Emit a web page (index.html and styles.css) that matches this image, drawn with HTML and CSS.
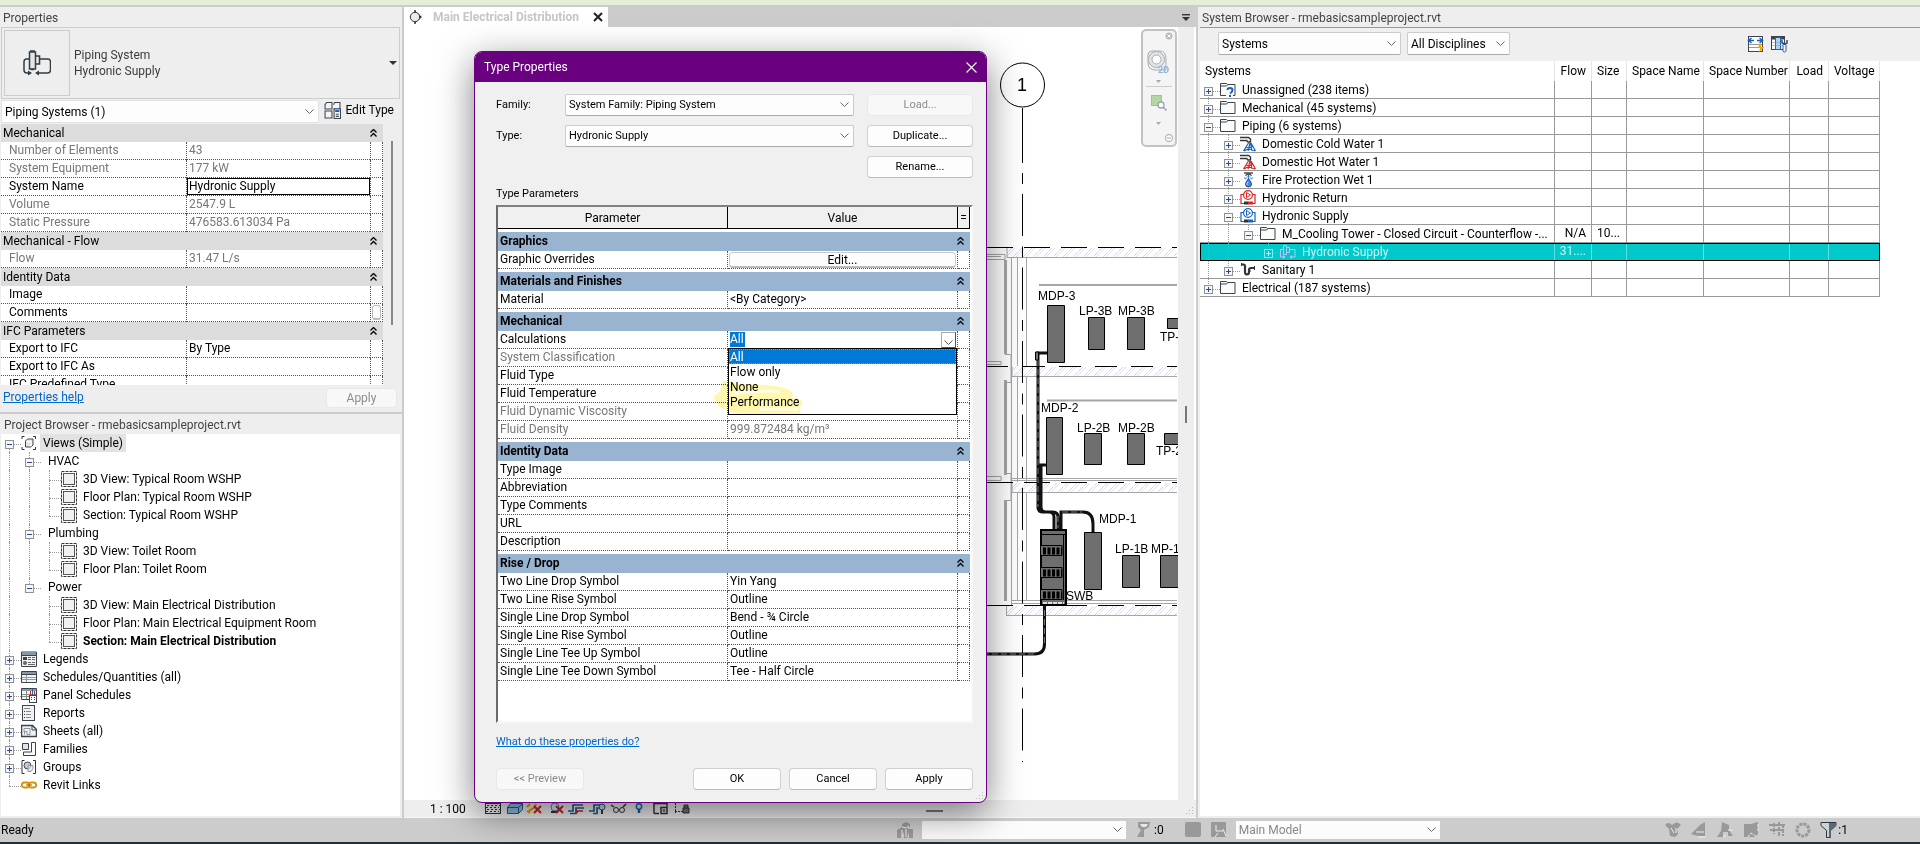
FILE: index.html
```html
<!DOCTYPE html>
<html lang="en">
<head>
    <meta charset="UTF-8">
    <meta name="viewport" content="width=device-width, initial-scale=1.0">
    <title>Main Electrical Distribution</title>
    <link rel="stylesheet" href="styles.css">
</head>
<body>
    <svg class="defs" aria-hidden="true">
        <symbol id="i-sheet" viewBox="0 0 16 16"><rect x="0.5" y="0.5" width="15" height="15" fill="none" stroke="#333" stroke-dasharray="3 1"/><rect x="2.5" y="2.5" width="11" height="11" fill="#f1f1f1" stroke="#555"/></symbol>
        <symbol id="i-views" viewBox="0 0 16 16"><path d="M3.500 1.500h-2.500v2.500M12 1.500h2.500v2.500M3.500 14.500h-2.500v-2.500M12 14.500h2.500v-2.500" fill="none" stroke="#333"/><path d="M4.500 6l2-2h5.500v6l-2 2h-5.500z" fill="#e4e6e8" stroke="#3d434c"/><path d="M5 6.500h5v5" fill="none" stroke="#fff"/></symbol>
        <symbol id="i-legend" viewBox="0 0 16 16"><path d="M0.500 1h15v14.500h-15z" fill="#f0f0f0" stroke="#3d434c"/><path d="M1 1h14v3H1z" fill="#8797a5"/><path d="M0 4.500h16" stroke="#3d434c"/><rect x="2" y="6" width="4" height="3" fill="#3d434c"/><circle cx="4" cy="12" r="2" fill="#666"/><path d="M7 6.500h3M11 6.500h3M7 8.500h3M11 8.500h3M7 11.500h3M11 11.500h3M7 13.500h7" stroke="#666"/></symbol>
        <symbol id="i-schedule" viewBox="0 0 16 16"><path d="M0.500 2.500h15v11h-15z" fill="#f4f4f4" stroke="#3d434c"/><path d="M1 3h14v2H1z" fill="#8797a5"/><path d="M0 5.500h16" stroke="#3d434c"/><path d="M1 8.500h14M1 10.500h14M5.500 6v7" stroke="#999"/></symbol>
        <symbol id="i-panel" viewBox="0 0 16 16"><path d="M0.500 1.500h15v11h-15z" fill="#f4f4f4" stroke="#3d434c"/><path d="M1 2h14v2H1z" fill="#8797a5"/><path d="M1 7.500h14M1 9.500h14M5.500 4v8" stroke="#888"/><path d="M9.500 4v4M13.500 4v4" stroke="#d22"/><path d="M11.500 2v7" stroke="#1565c0"/><rect x="8.500" y="8.500" width="7" height="7" fill="#fff" stroke="#3d434c"/><path d="M10.500 10v4M13.500 10v4" stroke="#3d434c" stroke-dasharray="1 1"/></symbol>
        <symbol id="i-report" viewBox="0 0 16 16"><rect x="1.500" y="0.500" width="12" height="15" fill="#f0f2f3" stroke="#3d434c"/><path d="M3 3.500h6M5 6.500h5M5 9.500h5M5 12.500h5" stroke="#888"/><path d="M3 6.500h1M3 9.500h1M3 12.500h1" stroke="#333"/></symbol>
        <symbol id="i-sheets" viewBox="0 0 16 16"><path d="M0.500 2.500h11l4 4v7h-15z" fill="#f0f2f3" stroke="#3d434c" stroke-width="1.500"/><path d="M11 2v5h5" fill="none" stroke="#3d434c"/><path d="M3 5.500h6v6h-3v-3h-3z M3.500 11.500v-3" fill="none" stroke="#8797a5"/></symbol>
        <symbol id="i-family" viewBox="0 0 16 16"><path d="M1.500 2.500h6v6h-6z" fill="#dfe5ea" stroke="#3d434c"/><path d="M10.500 1.500h4v13h-12v-3.500h8z" fill="#fafafa" stroke="#3d434c"/></symbol>
        <symbol id="i-group" viewBox="0 0 16 16"><path d="M3.500 1.500h-2.500v13h2.500M12 1.500h2.500v13h-2.500" fill="none" stroke="#333"/><circle cx="6.500" cy="6.500" r="3.500" fill="#c4ccd4" stroke="#3d434c"/><path d="M7 6.500h5v3l-2 3H7z" fill="#e4e6e8" fill-opacity=".7" stroke="#8797a5"/></symbol>
        <symbol id="i-link" viewBox="0 0 16 16"><rect x="0.800" y="5.500" width="7.500" height="5" rx="2.500" fill="none" stroke="#d99200" stroke-width="1.800"/><rect x="7.700" y="5.500" width="7.500" height="5" rx="2.500" fill="none" stroke="#d99200" stroke-width="1.800"/><path d="M5 8h6" stroke="#8b5c00"/></symbol>
        <symbol id="i-folder" viewBox="0 0 16 16"><path d="M.5 1.500v12h14.500v-11H7.500l-1-1z" fill="#fafbfb" stroke="#3d434c"/><path d="M.5 4h6l1.500-1.500" fill="none" stroke="#3d434c"/></symbol>
        <symbol id="i-unassigned" viewBox="0 0 16 16"><path d="M6 13.500H.5v-12h6l1 1H15v11h-2" fill="#fafbfb" stroke="#3d434c"/><path d="M.5 4h6l1.500-1.500" fill="none" stroke="#3d434c"/><path d="M7.500 8q0-2 2.500-2t2.500 2-2.500 3.500" fill="none" stroke="#1565c0" stroke-width="2"/><rect x="9" y="13" width="2" height="2" fill="#1565c0"/></symbol>
        <symbol id="i-tap" viewBox="0 0 16 16"><path d="M0 1.500h8.500l2 1.500v3M0 4.500h6.500l1.500 1.500h3" fill="none" stroke="#2f353d" stroke-width="1.400"/><path d="M0 3h8" stroke="#ccd3da" stroke-width="1.500"/><path d="M8.500 7l-5 8M10 7l-2 8M10.500 7l1.500 8M11 7l4.500 8M6 11l9 4M13 10l-9 5" stroke="currentColor" fill="none" stroke-width="1.200"/></symbol>
        <symbol id="i-fire" viewBox="0 0 16 16"><path d="M4 1h9M6 2.500h5" stroke="#555" stroke-width="1.500"/><path d="M5 3l7 4M12 3L5 7M8.500 3v4M4 6h1M12 6h1" stroke="#1a73c8" stroke-dasharray="2 1"/><path d="M8.500 6.500q-3 4-3 5.500a3 3 0 006 0q0-1.500-3-5.500z" fill="#4a86d8" stroke="#1e4f9c"/><path d="M8 10q-1.500 2-1 3" stroke="#c4e0fa" fill="none"/></symbol>
        <symbol id="i-pump" viewBox="0 0 16 16"><path d="M3.500 4.500H1v9h14v-9h-2.500" fill="none" stroke="currentColor" stroke-width="1.200"/><circle cx="8" cy="5" r="4.400" fill="#fff" stroke="currentColor" stroke-width="1.200"/><path d="M6.500 2.500l4 2.500-4 2.500z" fill="#fff" stroke="currentColor"/><path d="M4 13h4" stroke="#333" stroke-width="3"/><path d="M8 13h5" stroke="currentColor" stroke-width="3"/></symbol>
        <symbol id="i-trap" viewBox="0 0 16 16"><path d="M1 2.500h2.500q1.500 0 1.500 2V10q0 2.500 2 2.500t2-2.500V8q0-2 2-2h4" fill="none" stroke="#2f353d" stroke-width="2.200"/><path d="M1.500 1v3M14.500 4v4M8 9h3" stroke="#2f353d"/></symbol>
        <symbol id="i-pipe" viewBox="0 0 28 26"><path d="M6 9H3.500Q1 9 1 12v8q0 3 3 3h3M16 9h9q2.500 0 2.500 3v8q0 3-3 3H15" fill="none" stroke="currentColor" stroke-width="1.500"/><path d="M6.500 2h6v17h-6z" fill="#e3e6e9" stroke="currentColor" stroke-width="1.500"/><path d="M7 1h5M12.500 6h4v8h-4M8 19.500h3" fill="none" stroke="currentColor" stroke-width="1.600"/><path d="M5 20.500l4 2.500-4 2.500zM16 20.500l-4 2.500 4 2.500z" fill="currentColor"/></symbol>
        <symbol id="i-pipe-sm" viewBox="0 0 16 16"><path d="M3.500 5.500h-3v7.500h4M9.500 5.500h5.500v7.500h-4M3.500 1.500h3v9h-3zM6.500 3.500h3v5h-3" fill="none" stroke="currentColor"/><path d="M3 11l2.500 2-2.500 2zM12 11l-2.500 2 2.500 2z" fill="currentColor"/></symbol>
        <symbol id="i-chev" viewBox="0 0 7 8"><path d="M.5 3.500l3-3 3 3M.5 7.500l3-3 3 3" fill="none" stroke="#000" stroke-width="1.300"/></symbol>
    </svg>

    <div class="app">
        <div class="ribbon-edge"></div>

        <div class="workspace">
            <div class="left-dock">
                <section class="properties">
                    <h2 class="dock-title">Properties</h2>
                    <div class="type-selector">
                        <div class="type-thumb"><svg class="pipe-lg"><use href="#i-pipe"/></svg></div>
                        <div class="type-name">Piping System<br>Hydronic Supply</div>
                        <button class="type-arrow" aria-label="Change type"></button>
                    </div>
                    <div class="filter-row">
                        <select class="combo flat" aria-label="Element filter"><option>Piping Systems (1)</option></select>
                        <button class="edit-type"><svg viewBox="0 0 16 16"><path d="M1 2.500l1.500-2h5v6h-6.500zM9 2.500l1-2h5v6H9M1 8.500h6.500v6.500H1z" fill="#f5f5f5" stroke="#3d434c"/><rect x="9.500" y="6.500" width="6" height="9" fill="#fff" stroke="#3d434c"/><path d="M10.500 8.500h4" stroke="#1565c0" stroke-width="2"/><path d="M11 11.500h3M11 13.500h3" stroke="#3d434c"/></svg>Edit Type</button>
                    </div>
                    <div class="prop-scroll">
                        <table class="prop-table">
                            <colgroup><col class="c-prop"><col><col class="c-assoc"></colgroup>
                            <tbody>
                                <tr class="group"><th colspan="3">Mechanical<svg class="chev"><use href="#i-chev"/></svg></th></tr>
                                <tr class="off"><td>Number of Elements</td><td>43</td><td></td></tr>
                                <tr class="off"><td>System Equipment</td><td>177 kW</td><td></td></tr>
                                <tr><td>System Name</td><td class="editing"><input type="text" value="Hydronic Supply" aria-label="System Name"></td><td></td></tr>
                                <tr class="off"><td>Volume</td><td>2547.9 L</td><td></td></tr>
                                <tr class="off"><td>Static Pressure</td><td>476583.613034 Pa</td><td></td></tr>
                                <tr class="group"><th colspan="3">Mechanical - Flow<svg class="chev"><use href="#i-chev"/></svg></th></tr>
                                <tr class="off"><td>Flow</td><td>31.47 L/s</td><td></td></tr>
                                <tr class="group"><th colspan="3">Identity Data<svg class="chev"><use href="#i-chev"/></svg></th></tr>
                                <tr><td>Image</td><td></td><td></td></tr>
                                <tr><td>Comments</td><td></td><td><button class="mini" aria-label="Associate parameter"></button></td></tr>
                                <tr class="group"><th colspan="3">IFC Parameters<svg class="chev"><use href="#i-chev"/></svg></th></tr>
                                <tr><td>Export to IFC</td><td>By Type</td><td></td></tr>
                                <tr><td>Export to IFC As</td><td></td><td></td></tr>
                                <tr><td>IFC Predefined Type</td><td></td><td></td></tr>
                            </tbody>
                        </table>
                        <div class="thumb"></div>
                    </div>
                    <div class="prop-foot">
                        <a href="#">Properties help</a>
                        <button class="btn" disabled>Apply</button>
                    </div>
                </section>

                <section class="project-browser">
                    <h2 class="dock-title">Project Browser - rmebasicsampleproject.rvt</h2>
                    <ul class="tree">
                        <li><span class="g first tee"><button class="exp minus" aria-label="Collapse"></button></span><svg class="ico"><use href="#i-views"/></svg><span class="label picked">Views (Simple)</span></li>
                        <li><span class="g"></span><span class="g tee"><button class="exp minus" aria-label="Collapse"></button></span><span class="label branch">HVAC</span></li>
                        <li><span class="g"></span><span class="g"></span><span class="g tee"></span><svg class="ico"><use href="#i-sheet"/></svg><span class="label">3D View: Typical Room WSHP</span></li>
                        <li><span class="g"></span><span class="g"></span><span class="g tee"></span><svg class="ico"><use href="#i-sheet"/></svg><span class="label">Floor Plan: Typical Room WSHP</span></li>
                        <li><span class="g"></span><span class="g"></span><span class="g tee end"></span><svg class="ico"><use href="#i-sheet"/></svg><span class="label">Section: Typical Room WSHP</span></li>
                        <li><span class="g"></span><span class="g tee"><button class="exp minus" aria-label="Collapse"></button></span><span class="label branch">Plumbing</span></li>
                        <li><span class="g"></span><span class="g"></span><span class="g tee"></span><svg class="ico"><use href="#i-sheet"/></svg><span class="label">3D View: Toilet Room</span></li>
                        <li><span class="g"></span><span class="g"></span><span class="g tee end"></span><svg class="ico"><use href="#i-sheet"/></svg><span class="label">Floor Plan: Toilet Room</span></li>
                        <li><span class="g"></span><span class="g tee end"><button class="exp minus" aria-label="Collapse"></button></span><span class="label branch">Power</span></li>
                        <li><span class="g"></span><span class="g none"></span><span class="g tee"></span><svg class="ico"><use href="#i-sheet"/></svg><span class="label">3D View: Main Electrical Distribution</span></li>
                        <li><span class="g"></span><span class="g none"></span><span class="g tee"></span><svg class="ico"><use href="#i-sheet"/></svg><span class="label">Floor Plan: Main Electrical Equipment Room</span></li>
                        <li><span class="g"></span><span class="g none"></span><span class="g tee end"></span><svg class="ico"><use href="#i-sheet"/></svg><span class="label"><b>Section: Main Electrical Distribution</b></span></li>
                        <li><span class="g tee"><button class="exp" aria-label="Expand"></button></span><svg class="ico"><use href="#i-legend"/></svg><span class="label">Legends</span></li>
                        <li><span class="g tee"><button class="exp" aria-label="Expand"></button></span><svg class="ico"><use href="#i-schedule"/></svg><span class="label">Schedules/Quantities (all)</span></li>
                        <li><span class="g tee"><button class="exp" aria-label="Expand"></button></span><svg class="ico"><use href="#i-panel"/></svg><span class="label">Panel Schedules</span></li>
                        <li><span class="g tee"><button class="exp" aria-label="Expand"></button></span><svg class="ico"><use href="#i-report"/></svg><span class="label">Reports</span></li>
                        <li><span class="g tee"><button class="exp" aria-label="Expand"></button></span><svg class="ico"><use href="#i-sheets"/></svg><span class="label">Sheets (all)</span></li>
                        <li><span class="g tee"><button class="exp" aria-label="Expand"></button></span><svg class="ico"><use href="#i-family"/></svg><span class="label">Families</span></li>
                        <li><span class="g tee"><button class="exp" aria-label="Expand"></button></span><svg class="ico"><use href="#i-group"/></svg><span class="label">Groups</span></li>
                        <li><span class="g tee end"></span><svg class="ico"><use href="#i-link"/></svg><span class="label">Revit Links</span></li>
                    </ul>
                </section>
            </div>

            <main class="view">
                <div class="tabs">
                    <div class="tab">
                        <svg class="tab-ico" viewBox="0 0 14 16"><path d="M6 1v14" stroke="#2f353d" stroke-width="1.500"/><path d="M6 2l7 6-7 6z" fill="#2f353d"/><circle cx="6" cy="8" r="4.700" fill="#e8ecef" stroke="#2f353d"/></svg>
                        <span>Main Electrical Distribution</span>
                        <button class="tab-close" aria-label="Close view"><svg viewBox="0 0 10 10"><path d="M1 1l8 8M9 1l-8 8" stroke="#222" stroke-width="2"/></svg></button>
                    </div>
                    <button class="tab-list" aria-label="List views"><svg viewBox="0 0 8 7"><path d="M0 .7h8" stroke="#333" stroke-width="1.400"/><path d="M0 3h8L4 7z" fill="#333"/></svg></button>
                </div>
                <div class="canvas-row">
                    <div class="canvas">
                        <svg class="drawing" viewBox="404 27 774 773" preserveAspectRatio="xMaxYMin meet">
                            <defs>
                                <pattern id="hatch" width="10" height="10" patternUnits="userSpaceOnUse"><path d="M0 10L10 0" stroke="#cfcff0" stroke-dasharray="5 1"/><path d="M3 10L13 0M-7 10L3 0" stroke="#dedef5"/></pattern>
                            </defs>
                            <g fill="url(#hatch)" stroke="none">
                                <rect x="1007" y="248" width="170" height="9"/>
                                <rect x="1012" y="367" width="165" height="9"/>
                                <rect x="1012" y="483" width="165" height="9"/>
                                <rect x="1006" y="606" width="171" height="9"/>
                            </g>
                            <g stroke="#a6a6a6" fill="none">
                                <path d="M1007 257.500h170M1012 376.500h165M1012 492.500h165M1006 615.500h171M1007 248v10M1012 367v10M1012 483v10M1006.500 606v10"/>
                                <path d="M1011.500 258v347M1017.500 258v108M1017.500 377v105M1017.500 493v107M1026.500 258v108M1026.500 377v105M1026.500 493v107"/>
                                <path d="M1012 478.500h165M1012 480.500h165M1012 600.500h165M1012 603.500h165"/>
                                <path d="M987 254.500h18v5h-18M987 256.500h14M987 361.500h14v3h-14M987 476.500h14v4h-14M1005 354.500h6v28h-6M1005 473.500h6v27h-6"/>
                                <path d="M1005.500 260v94M1005.500 380v95M1005.500 500v101" stroke-width="3"/>
                                <path d="M1039 285h138M1047 400.500h130" stroke-width="2"/>
                            </g>
                            <g stroke="#000" fill="none">
                                <path d="M987 247.500h190M987 366.500h21M987 482.500h190M987 605.500h190" stroke-dasharray="26 11"/>
                                <path d="M1023 366.500h154" stroke-dasharray="22 14"/>
                                <circle cx="1022.500" cy="85" r="22"/>
                                <path d="M1022.500 108v55"/>
                                <path d="M1022.500 173v589" stroke-dasharray="11 10 42 10.500"/>
                            </g>
                            <g fill="none" stroke="#111" stroke-width="3">
                                <path d="M1047 353h-9v154q0 5 5 5h10q5 0 5 5v12M1046 465h-5v42q0 5 5 5h3q5 0 5 5v12M1061 529v-17h22q10 0 10 12v8M1044.500 606v38q0 10-10 10H987"/>
                            </g>
                            <path d="M1038 360v147M1058 516v12M1062 512h20M1044.500 610v34M1034 654h-47" fill="none" stroke="#777" stroke-dasharray="6 3"/>
                            <path d="M1035.500 352h3v8h-3z" fill="#777" stroke="#000"/>
                            <g fill="#6e6e6e" stroke="#000">
                                <path d="M1047.500 305.500h17v57h-17zM1088.500 317.500h16v32h-16zM1127.500 317.500h17v32h-17zM1167.500 318.500h12v10h-12z"/>
                                <path d="M1046.500 417.500h16v57h-16zM1084.500 433.500h17v31h-17zM1127.500 433.500h17v31h-17zM1164.500 433.500h15v11h-15z"/>
                                <path d="M1084.500 532.500h17v57h-17zM1122.500 555.500h17v32h-17zM1160.500 555.500h19v32h-19z"/>
                                <path d="M1041 530h25v75h-25z" stroke-width="2"/>
                                <path d="M1041 534.500h25M1063.500 535v65M1041 545.500h21v10h-21M1041 567.500h21v10h-21M1041 589.500h21v10h-21"/>
                            </g>
                            <path d="M1043 551h19M1043 573h19M1043 595h19" stroke="#000" stroke-width="7" stroke-dasharray="3 1.500"/>
                            <path d="M1043 603h21" stroke="#ddd" stroke-width="2" stroke-dasharray="4 1"/>
                            <g class="tags">
                                <text class="bubble" x="1017" y="91">1</text>
                                <text x="1038" y="300">MDP-3</text><text x="1079" y="315">LP-3B</text><text x="1118" y="315">MP-3B</text><text x="1160" y="341">TP-3</text>
                                <text x="1041" y="412">MDP-2</text><text x="1077" y="432">LP-2B</text><text x="1118" y="432">MP-2B</text><text x="1156" y="455">TP-2</text>
                                <text x="1099" y="523">MDP-1</text><text x="1115" y="553">LP-1B</text><text x="1151" y="553">MP-1B</text><text x="1066" y="600">SWB</text>
                            </g>
                        </svg>
                        <div class="nav-bar">
                            <svg viewBox="0 0 36 118">
                                <circle cx="28" cy="7" r="3.500" fill="#bbb"/><path d="M26.500 5.500l3 3M29.500 5.500l-3 3" stroke="#fff"/>
                                <path d="M7 34V26q0-4 4-4h8q6 0 6 8v11H15q-8 0-8-7z" fill="#eef0f1" stroke="#a9adb1"/><circle cx="15.500" cy="30.500" r="8" fill="#e2e5e7" stroke="#a9adb1"/><circle cx="15.500" cy="30.500" r="4.500" fill="#fff" stroke="#a9adb1"/>
                                <text x="17" y="44">2D</text>
                                <path d="M15 51h5l-2.500 3zM15 93h5l-2.500 3z" fill="#aaa"/><path d="M5 57.500h26" stroke="#ccc"/>
                                <rect x="10.500" y="66.500" width="10" height="10" fill="#b4d6a3" stroke="#9dc48b"/><circle cx="20" cy="76" r="3" fill="#fff" stroke="#9aa4ae" stroke-width="1.300"/><path d="M22 78l3.500 3.500" stroke="#9aa4ae" stroke-width="1.500"/>
                                <circle cx="28" cy="109" r="3.500" fill="#fff" stroke="#bbb" stroke-width="1.300"/><path d="M26 109h4" stroke="#bbb" stroke-width="1.300"/>
                            </svg>
                        </div>
                    </div>
                    <div class="vscroll"><div></div></div>
                </div>
                <div class="view-controls">
                    <span class="scale">1 : 100</span>
                    <svg class="vc-icons" viewBox="0 0 206 12">
                        <g fill="none" stroke="#333">
                            <rect x=".5" y=".5" width="15" height="10"/><path d="M2 2.500h13M1 4.500h13M2 6.500h13M1 8.500h13" stroke-dasharray="2 2"/>
                            <path d="M22.500 4.500l3-4h12v6l-4 4h-11zM22.500 4.500h11v6M33.500 4.500l4-4" fill="#8fc4e8" stroke="#235e8c"/>
                            <path d="M42 4l3-3M42 8l3 2M51 1l-2 4q-5 2-5 4" stroke="#e6a100" stroke-width="2"/><path d="M49 3l7 7M56 3l-7 7" stroke="#d02020" stroke-width="2"/>
                            <circle cx="70" cy="4" r="4" fill="#dcebf5" stroke="#4a86b0"/><path d="M66 9h7" stroke-width="2"/><path d="M71 3l7 7M78 3l-7 7" stroke="#d02020" stroke-width="2"/>
                            <path d="M83 8h5V2h10M85 10.500h6V5h8" stroke="#235e8c" stroke-width="1.700"/><path d="M92 10V8h6" stroke="#d02020" stroke-width="1.700"/>
                            <path d="M104 8h5V2h7M108 10.500h4V5h4" stroke="#235e8c" stroke-width="1.700"/><circle cx="117" cy="4" r="3" fill="#bcdcf2" stroke="#235e8c"/><path d="M117 7v4" stroke-width="2"/>
                            <path d="M126 2l3 2M141 1l-3 3" stroke-width="1.500"/><circle cx="131" cy="7" r="2.500"/><circle cx="137" cy="7" r="2.500"/>
                            <circle cx="154" cy="3.500" r="2.700" fill="#cfe6f7" stroke="#1a73c8" stroke-width="1.500"/><path d="M154 6v4" stroke="#235e8c" stroke-width="2.500"/>
                            <path d="M169 10.500V.5h13v3M169 10.500h5M176 4.500h6v6h-6z" stroke-width="1.500"/><circle cx="179" cy="7.500" r="1"/>
                            <path d="M190.500 0v10M190 8.500h8" stroke-dasharray="2 1"/><path d="M198 5h6v5h-6zM199 5V2h4v3" fill="#777"/>
                        </g>
                    </svg>
                    <div class="hthumb"></div>
                    <div class="grip"></div>
                </div>
            </main>

            <section class="system-browser">
                <h2 class="dock-title">System Browser - rmebasicsampleproject.rvt</h2>
                <div class="sb-toolbar">
                    <select class="combo sb-view" aria-label="View"><option>Systems</option></select>
                    <select class="combo sb-disc" aria-label="Discipline"><option>All Disciplines</option></select>
                    <div class="sb-tools">
                        <button aria-label="Autofit columns"><svg viewBox="0 0 18 18"><rect x="1.500" y="1.500" width="14" height="15" fill="#fff" stroke="#3d434c"/><path d="M2 9.500h13M2 12.500h10" stroke="#999"/><path d="M2 5.500h5M10 5.500h5M4.500 3l-3 2.500 3 2.500M12.500 3l3 2.500-3 2.500" stroke="#1565c0" fill="none" stroke-width="1.500"/><path d="M14 8l-4 5h3l-1 5 5-6h-3z" fill="#f5a800"/></svg></button>
                        <button aria-label="Column settings"><svg viewBox="0 0 18 18"><rect x="1.500" y="1.500" width="13" height="13" fill="#fff" stroke="#3d434c"/><path d="M1 3h14" stroke="#3d434c" stroke-width="3"/><rect x="5.500" y="2.500" width="5" height="12" fill="#aed6f1" stroke="#1565c0"/><path d="M2 7.500h12M2 10.500h12" stroke="#999" opacity=".6"/><rect x="13" y="9" width="3" height="8" rx="1.500" fill="#fff" stroke="#33507a"/><path d="M12 5v3l2.500 1.500L17 8V5" fill="none" stroke="#33507a" stroke-width="1.500"/></svg></button>
                    </div>
                </div>
                <div class="sb-body">
                    <table class="sb-table">
                        <colgroup><col class="c-sys"><col class="c-flow"><col class="c-size"><col class="c-name"><col class="c-num"><col class="c-load"><col class="c-volt"></colgroup>
                        <thead>
                            <tr><th>Systems</th><th class="r">Flow</th><th>Size</th><th>Space Name</th><th>Space Number</th><th class="r">Load</th><th class="r">Voltage</th></tr>
                        </thead>
                        <tbody>
                            <tr><td><div class="node"><span class="g first tee"><button class="exp" aria-label="Expand"></button></span><svg class="ico"><use href="#i-unassigned"/></svg><span class="label">Unassigned (238 items)</span></div></td><td></td><td></td><td></td><td></td><td></td><td></td></tr>
                            <tr><td><div class="node"><span class="g tee"><button class="exp" aria-label="Expand"></button></span><svg class="ico"><use href="#i-folder"/></svg><span class="label">Mechanical (45 systems)</span></div></td><td></td><td></td><td></td><td></td><td></td><td></td></tr>
                            <tr><td><div class="node"><span class="g tee"><button class="exp minus" aria-label="Collapse"></button></span><svg class="ico"><use href="#i-folder"/></svg><span class="label">Piping (6 systems)</span></div></td><td></td><td></td><td></td><td></td><td></td><td></td></tr>
                            <tr><td><div class="node"><span class="g"></span><span class="g tee"><button class="exp" aria-label="Expand"></button></span><svg class="ico cold"><use href="#i-tap"/></svg><span class="label">Domestic Cold Water 1</span></div></td><td></td><td></td><td></td><td></td><td></td><td></td></tr>
                            <tr><td><div class="node"><span class="g"></span><span class="g tee"><button class="exp" aria-label="Expand"></button></span><svg class="ico hot"><use href="#i-tap"/></svg><span class="label">Domestic Hot Water 1</span></div></td><td></td><td></td><td></td><td></td><td></td><td></td></tr>
                            <tr><td><div class="node"><span class="g"></span><span class="g tee"><button class="exp" aria-label="Expand"></button></span><svg class="ico"><use href="#i-fire"/></svg><span class="label">Fire Protection Wet 1</span></div></td><td></td><td></td><td></td><td></td><td></td><td></td></tr>
                            <tr><td><div class="node"><span class="g"></span><span class="g tee"><button class="exp" aria-label="Expand"></button></span><svg class="ico hot"><use href="#i-pump"/></svg><span class="label">Hydronic Return</span></div></td><td></td><td></td><td></td><td></td><td></td><td></td></tr>
                            <tr><td><div class="node"><span class="g"></span><span class="g tee"><button class="exp minus" aria-label="Collapse"></button></span><svg class="ico cold"><use href="#i-pump"/></svg><span class="label">Hydronic Supply</span></div></td><td></td><td></td><td></td><td></td><td></td><td></td></tr>
                            <tr><td><div class="node"><span class="g"></span><span class="g"></span><span class="g tee end"><button class="exp minus" aria-label="Collapse"></button></span><svg class="ico"><use href="#i-folder"/></svg><span class="label">M_Cooling Tower - Closed Circuit - Counterflow -...</span></div></td><td class="r">N/A</td><td>10...</td><td></td><td></td><td></td><td></td></tr>
                            <tr class="current"><td><div class="node"><span class="g"></span><span class="g"></span><span class="g none"></span><span class="g tee end"><button class="exp" aria-label="Expand"></button></span><svg class="ico"><use href="#i-pipe-sm"/></svg><span class="label">Hydronic Supply</span></div></td><td class="r">31....</td><td></td><td></td><td></td><td></td><td></td></tr>
                            <tr><td><div class="node"><span class="g"></span><span class="g tee end"><button class="exp" aria-label="Expand"></button></span><svg class="ico"><use href="#i-trap"/></svg><span class="label">Sanitary 1</span></div></td><td></td><td></td><td></td><td></td><td></td><td></td></tr>
                            <tr><td><div class="node"><span class="g tee end"><button class="exp" aria-label="Expand"></button></span><svg class="ico"><use href="#i-folder"/></svg><span class="label">Electrical (187 systems)</span></div></td><td></td><td></td><td></td><td></td><td></td><td></td></tr>
                        </tbody>
                    </table>
                </div>
            </section>
        </div>

        <footer class="status">
            <span class="ready">Ready</span>
            <div class="status-sets">
                <svg class="sico" viewBox="0 0 18 18"><path d="M6 3l4-2 4 2v3h-2v2h5v9h-4v-6l-2 6h-3v-6l-3 6H1V9l5-3z"/><path d="M6 6l4 1 3-2M6 9v7M10 8v8" stroke="#eee" fill="none"/></svg>
                <select class="combo" aria-label="Active workset"><option></option></select>
                <svg class="sico" viewBox="0 0 16 18"><path d="M3 1h12l-1 5-5 3v7H2l4-7-3-3z"/><path d="M5 3h8l-2 3H7z" fill="#e6e6e6"/></svg>
                <span class="count">:0</span>
                <svg class="sico gap" viewBox="0 0 16 18"><rect x="0" y="1" width="16" height="15" rx="2"/></svg>
                <svg class="sico" viewBox="0 0 16 18"><rect x="0" y="1" width="15" height="15" rx="1"/><path d="M5 4v6h7M7 12l-3 4M12 8l3 7" stroke="#eee" fill="none"/></svg>
                <select class="combo" aria-label="Design option"><option>Main Model</option></select>
            </div>
            <div class="status-filters">
                <svg class="sico" viewBox="0 0 18 18"><path d="M1 4q3-4 7 0q5-5 9 0l-4 4 1 5-3 3-5-1-1-7z"/><path d="M7 7l3 5M12 7v5" stroke="#eee" fill="none"/></svg>
                <svg class="sico" viewBox="0 0 18 18"><path d="M1 13l9-9 5-3v14H8z"/><path d="M8 16h8M6 11h8" stroke="#eee" fill="none"/></svg>
                <svg class="sico" viewBox="0 0 18 18"><path d="M6 1l7 3v5l4 6h-5v-4H7v5H1l4-6z"/><path d="M7 15h3M12 9h5" stroke="#eee" fill="none"/></svg>
                <svg class="sico" viewBox="0 0 18 18"><path d="M2 3h7l7-2v12l-3 3H2z"/><path d="M6 16l3-4 6 4M16 3v8" stroke="#eee" fill="none" stroke-dasharray="3 1"/></svg>
                <svg class="sico" viewBox="0 0 18 18"><path d="M1 4h16M2 9h12M6 2v11M11 1v15M15 3v12" stroke="#999" stroke-width="2" stroke-dasharray="4 1"/></svg>
                <svg class="sico" viewBox="0 0 18 18"><circle cx="9" cy="9" r="6" fill="none" stroke="#999" stroke-width="3" stroke-dasharray="3 1"/></svg>
                <svg class="sico" viewBox="0 0 18 18"><path d="M1 1.500h15v3l-5.500 5v7h-4v-7L1 4.500z" fill="#c9d3dc" stroke="#2f353d"/><path d="M9 2h7v3l-5 4.500v7H9z" fill="#5c6873"/></svg>
                <span class="count on">:1</span>
            </div>
        </footer>
    </div>

    <div class="dialog" role="dialog" aria-labelledby="dlg-title">
        <div class="dlg-head">
            <h1 id="dlg-title">Type Properties</h1>
            <button aria-label="Close"><svg viewBox="0 0 11 11"><path d="M.5.5l10 10M10.500.5l-10 10" stroke="#fff" stroke-width="1.100"/></svg></button>
        </div>
        <div class="dlg-body">
            <div class="dlg-form">
                <label for="family">Family:</label>
                <select class="combo" id="family"><option>System Family: Piping System</option></select>
                <button class="btn" disabled>Load...</button>
                <label for="type">Type:</label>
                <select class="combo" id="type"><option>Hydronic Supply</option></select>
                <button class="btn">Duplicate...</button>
                <button class="btn rename">Rename...</button>
            </div>
            <div class="params-title">Type Parameters</div>
            <div class="params">
                <table class="param-table">
                    <colgroup><col><col><col class="c-eq"></colgroup>
                    <thead><tr><th>Parameter</th><th>Value</th><th>=</th></tr></thead>
                    <tbody>
                        <tr class="group"><th colspan="3">Graphics<svg class="chev"><use href="#i-chev"/></svg></th></tr>
                        <tr><td>Graphic Overrides</td><td><button class="cell-btn">Edit...</button></td><td></td></tr>
                    </tbody>
                    <tbody>
                        <tr class="group"><th colspan="3">Materials and Finishes<svg class="chev"><use href="#i-chev"/></svg></th></tr>
                        <tr><td>Material</td><td>&lt;By Category&gt;</td><td></td></tr>
                    </tbody>
                    <tbody>
                        <tr class="group"><th colspan="3">Mechanical<svg class="chev"><use href="#i-chev"/></svg></th></tr>
                        <tr><td>Calculations</td><td class="picker">
                            <div class="picker-row"><input type="text" value="All" aria-label="Calculations"><button aria-label="Show choices"></button></div>
                            <ul class="choices">
                                <li class="on">All</li>
                                <li>Flow only</li>
                                <li>None</li>
                                <li>Performance</li>
                            </ul>
                            <svg class="marker" viewBox="0 0 94 40"><path d="M10 3q6-4 14 2q40 0 54 6q5 4 1 8q10 0 11 4q0 5-4 6q4 2 2 6H40Q10 36 3 22Q1 18 4 16Q10 12 10 3z" fill="#fff27a"/><path d="M20 15q15-3 34-3q14 0 13 3M48 30h38" fill="none" stroke="#fffbd6" stroke-width="3"/></svg>
                        </td><td></td></tr>
                        <tr class="off"><td>System Classification</td><td></td><td></td></tr>
                        <tr><td>Fluid Type</td><td></td><td></td></tr>
                        <tr><td>Fluid Temperature</td><td></td><td></td></tr>
                        <tr class="off"><td>Fluid Dynamic Viscosity</td><td></td><td></td></tr>
                        <tr class="off"><td>Fluid Density</td><td>999.872484 kg/m³</td><td></td></tr>
                    </tbody>
                    <tbody>
                        <tr class="group"><th colspan="3">Identity Data<svg class="chev"><use href="#i-chev"/></svg></th></tr>
                        <tr><td>Type Image</td><td></td><td></td></tr>
                        <tr><td>Abbreviation</td><td></td><td></td></tr>
                        <tr><td>Type Comments</td><td></td><td></td></tr>
                        <tr><td>URL</td><td></td><td></td></tr>
                        <tr><td>Description</td><td></td><td></td></tr>
                    </tbody>
                    <tbody>
                        <tr class="group"><th colspan="3">Rise / Drop<svg class="chev"><use href="#i-chev"/></svg></th></tr>
                        <tr><td>Two Line Drop Symbol</td><td>Yin Yang</td><td></td></tr>
                        <tr><td>Two Line Rise Symbol</td><td>Outline</td><td></td></tr>
                        <tr><td>Single Line Drop Symbol</td><td>Bend - ¾ Circle</td><td></td></tr>
                        <tr><td>Single Line Rise Symbol</td><td>Outline</td><td></td></tr>
                        <tr><td>Single Line Tee Up Symbol</td><td>Outline</td><td></td></tr>
                        <tr><td>Single Line Tee Down Symbol</td><td>Tee - Half Circle</td><td></td></tr>
                    </tbody>
                </table>
            </div>
            <a class="dlg-help" href="#">What do these properties do?</a>
            <div class="dlg-actions">
                <button class="btn preview" disabled>&lt;&lt; Preview</button>
                <button class="btn">OK</button>
                <button class="btn">Cancel</button>
                <button class="btn">Apply</button>
            </div>
        </div>
        <div class="grip"></div>
    </div>
</body>
</html>
```
FILE: styles.css
```css
* {
    box-sizing: border-box;
}

body {
    margin: 0;
    height: 100vh;
    overflow: hidden;
    position: relative;
    font-family: Roboto, "Noto Sans", sans-serif;
    font-size: 12px;
    line-height: 18px;
    color: #000;
}

h1, h2 {
    margin: 0;
    font-size: inherit;
    font-weight: normal;
}

ul {
    margin: 0;
    padding: 0;
    list-style: none;
}

button, input, select {
    font: inherit;
    color: inherit;
    padding: 0;
    margin: 0;
    border: 0;
    background: none;
}

a {
    color: #0066cc;
}

table {
    border-collapse: separate;
    border-spacing: 0;
    table-layout: fixed;
    width: 100%;
}

th, td {
    padding: 0;
    font-weight: normal;
    text-align: left;
    white-space: nowrap;
}

svg {
    display: block;
    flex: none;
}

.defs {
    position: absolute;
    width: 0;
    height: 0;
}

.app {
    height: 100%;
    display: flex;
    flex-direction: column;
    background: #ccc;
    border-bottom: 2px solid #252f38;
}

.ribbon-edge {
    height: 5px;
    flex: none;
    background: #e5efd7;
}

.workspace {
    flex: 1;
    min-height: 0;
    display: grid;
    grid-template-columns: 402px minmax(0, 1fr) 722px;
    gap: 2px;
    padding-top: 2px;
}

.dock-title {
    height: 20px;
    line-height: 22px;
    padding-left: 3px;
    color: #444;
    flex: none;
}

.btn {
    height: 22px;
    background: #fdfdfd;
    border: 1px solid #d0d0d0;
    border-bottom-color: #bbb;
    border-radius: 4px;
    text-align: center;
}

.btn:disabled {
    color: #8c8c8c;
    background: #f8f8f8;
    border-color: #e8e8e8;
}

.combo {
    appearance: none;
    height: 22px;
    min-width: 0;
    padding: 0 20px 0 3px;
    border: 1px solid #ccc;
    border-bottom-color: #aaa;
    border-radius: 2px;
    background: #fdfdfd url("data:image/svg+xml,%3Csvg xmlns='http://www.w3.org/2000/svg' width='9' height='6'%3E%3Cpath d='M.5.5l4 4 4-4' fill='none' stroke='%23666'/%3E%3C/svg%3E") no-repeat right 4px center;
}

.chev {
    width: 7px;
    height: 8px;
    float: right;
    margin: 5px 6px 0 0;
}

.off {
    color: #777;
}

/* left dock */
.left-dock {
    display: flex;
    flex-direction: column;
    gap: 2px;
    min-height: 0;
}

.properties {
    background: #eee;
    flex: none;
    display: flex;
    flex-direction: column;
}

.type-selector {
    display: flex;
    align-items: center;
    height: 72px;
    margin: 0 2px 0 1px;
    padding: 2px;
    border: 1px solid #ccc;
    color: #3c3c3c;
}

.type-thumb {
    width: 66px;
    height: 66px;
    border: 1px solid #ccc;
    display: grid;
    place-items: center;
    color: #333b45;
}

.pipe-lg {
    width: 28px;
    height: 26px;
}

.type-name {
    flex: 1;
    padding-left: 4px;
    line-height: 16px;
}

.type-arrow {
    border: 4px solid transparent;
    border-top-color: #333;
    border-bottom: 0;
}

.filter-row {
    display: flex;
    gap: 5px;
    height: 25px;
    padding: 1px 8px 1px 1px;
}

.filter-row .combo {
    flex: 1;
    height: 23px;
    border-color: #e2e2e2;
}

.edit-type {
    display: flex;
    align-items: center;
    gap: 4px;
    height: 20px;
}

.edit-type svg {
    width: 17px;
    height: 17px;
}

.prop-scroll {
    display: flex;
    height: 261px;
    overflow: hidden;
    padding-left: 1px;
}

.prop-table {
    width: 382px;
    align-self: flex-start;
}

.c-prop {
    width: 185px;
}

.c-assoc {
    width: 13px;
}

.prop-table td {
    height: 18px;
    line-height: 17px;
    padding-left: 8px;
    background: #fff;
    border-bottom: 1px dotted #555;
}

.prop-table td:nth-child(2) {
    padding-left: 2px;
    border-left: 1px dotted #555;
}

.prop-table td:nth-child(3) {
    padding: 0;
    border-left: 1px dotted #555;
    border-right: 1px dotted #555;
}

.prop-table .group th {
    height: 18px;
    padding-left: 2px;
    background: #dcdcdc;
}

.prop-table td.editing {
    padding: 0;
}

.editing input {
    display: block;
    width: 100%;
    height: 17px;
    padding-left: 1px;
    border: 1px solid #000;
}

.mini {
    display: block;
    width: 9px;
    height: 15px;
    margin: 1px;
    border: 1px solid #bbb;
    border-bottom-width: 2px;
    border-radius: 3px;
}

.thumb {
    width: 2px;
    height: 184px;
    margin: 17px 0 0 8px;
    background: #888;
}

.prop-foot {
    height: 27px;
    padding: 3px 5px 0 3px;
    display: flex;
    justify-content: space-between;
}

.prop-foot .btn {
    width: 71px;
    height: 20px;
}

.project-browser {
    flex: 1;
    min-height: 0;
    display: flex;
    flex-direction: column;
    padding: 0 2px 2px 1px;
    background: #eee;
}

.tree {
    flex: 1;
    background: #fff;
}

.tree li, .node {
    display: flex;
    height: 18px;
}

.g {
    position: relative;
    flex: 0 0 20px;
}

.g::before {
    content: "";
    position: absolute;
    left: 8px;
    top: 0;
    bottom: 0;
    border-left: 1px dotted #999;
}

.g.first::before {
    top: 10px;
}

.g.end::before {
    bottom: 8px;
}

.g.none::before {
    display: none;
}

.g.tee::after {
    content: "";
    position: absolute;
    left: 8px;
    right: 0;
    top: 10px;
    border-top: 1px dotted #999;
}

.exp {
    position: absolute;
    z-index: 1;
    left: 4px;
    top: 6px;
    width: 9px;
    height: 9px;
    border: 1px solid #919191;
    background: linear-gradient(#2b4a9b, #2b4a9b) center / 5px 1px no-repeat, linear-gradient(#2b4a9b, #2b4a9b) center / 1px 5px no-repeat, #f6f6f6;
}

.exp.minus {
    background: linear-gradient(#2b4a9b, #2b4a9b) center / 5px 1px no-repeat, #f6f6f6;
}

.ico {
    width: 16px;
    height: 16px;
    margin-top: 1px;
}

.label {
    padding: 0 3px;
    margin-left: 3px;
    white-space: nowrap;
}

.label.branch {
    margin-left: 4px;
}

.label.picked {
    background: #e2e2e2;
}

/* drawing view */
.view {
    display: flex;
    flex-direction: column;
    min-width: 0;
    background: #fff;
}

.tabs {
    display: flex;
    justify-content: space-between;
    align-items: center;
    height: 20px;
    flex: none;
    background: #ccc;
}

.tab {
    display: flex;
    align-items: center;
    height: 20px;
    padding: 0 5px;
    background: #fff;
    color: #c6c6c6;
    font-weight: bold;
}

.tab-ico {
    width: 14px;
    height: 16px;
    margin-right: 10px;
}

.tab-close {
    margin-left: 14px;
}

.tab-close svg {
    width: 10px;
    height: 10px;
}

.tab-list {
    margin-right: 6px;
}

.tab-list svg {
    width: 8px;
    height: 7px;
}

.canvas-row {
    flex: 1;
    min-height: 0;
    display: flex;
    padding-right: 2px;
}

.canvas {
    flex: 1;
    min-width: 0;
    position: relative;
    overflow: hidden;
}

.drawing {
    width: 100%;
    height: 100%;
}

.tags {
    font-family: "Liberation Sans", sans-serif;
    font-size: 12px;
}

.bubble {
    font-size: 18px;
}

.nav-bar {
    position: absolute;
    top: 2px;
    right: 1px;
    width: 36px;
    height: 118px;
    border: 2px solid #c2c2c2;
    border-radius: 5px;
    background: #f4f4f4;
}

.nav-bar svg {
    width: 36px;
    height: 118px;
    margin: -2px;
}

.nav-bar text {
    font-size: 9px;
    font-weight: bold;
    fill: #8fb3d3;
}

.vscroll {
    width: 16px;
    background: #eee;
    padding: 379px 0 0 7px;
}

.vscroll div {
    width: 2px;
    height: 17px;
    background: #777;
}

.view-controls {
    display: flex;
    align-items: center;
    height: 18px;
    flex: none;
    position: relative;
    padding-left: 26px;
    background: #eee;
    border-bottom: 1px solid #f8f8f8;
}

.scale {
    width: 55px;
}

.vc-icons {
    width: 206px;
    height: 12px;
}

.hthumb {
    width: 17px;
    height: 2px;
    margin: 4px 0 0 235px;
    background: #777;
}

.grip {
    position: absolute;
    right: 3px;
    bottom: 3px;
    width: 8px;
    height: 8px;
    background: radial-gradient(#bbb 1px, transparent 1px) 0 0 / 3px 3px;
    clip-path: polygon(100% 0, 100% 100%, 0 100%);
}

/* system browser */
.system-browser {
    display: flex;
    flex-direction: column;
    background: #eee;
    padding: 0 0 2px 2px;
}

.system-browser .dock-title {
    padding-left: 2px;
}

.sb-toolbar {
    display: flex;
    gap: 6px;
    height: 34px;
    padding: 4px 132px 0 18px;
    border-top: 1px solid #999;
    background: #efefef;
}

.sb-toolbar .combo {
    height: 23px;
}

.sb-view {
    width: 183px;
}

.sb-disc {
    width: 103px;
}

.sb-tools {
    margin-left: auto;
    display: flex;
    gap: 5px;
    align-items: center;
    height: 23px;
}

.sb-tools svg {
    width: 18px;
    height: 18px;
}

.sb-body {
    flex: 1;
    background: #fff;
}

.sb-table {
    width: 680px;
}

.c-flow {
    width: 37px;
}

.c-size {
    width: 35px;
}

.c-name {
    width: 77px;
}

.c-num {
    width: 86px;
}

.c-load {
    width: 39px;
}

.c-volt {
    width: 51px;
}

.sb-table th {
    height: 20px;
    padding: 0 5px;
    border-right: 1px solid #e5e5e5;
}

.sb-table td {
    height: 18px;
    padding: 0 0 0 5px;
    border-right: 1px solid #999;
    border-bottom: 1px solid #999;
    line-height: 17px;
}

.sb-table td:first-child {
    padding: 0;
}

.sb-table th.r {
    text-align: right;
}

.sb-table td.r {
    padding: 0 5px 0 0;
    text-align: right;
}

.sb-table .node {
    height: 17px;
    line-height: 19px;
    overflow: hidden;
}

.cold {
    color: #1565c0;
}

.hot {
    color: #e02020;
}

.current {
    background: #00c8cb;
    color: #c8f6f0;
    outline: 1px solid #000;
    outline-offset: -1px;
}

.sb-table .current td {
    border-color: #5fdfdf;
}

.current .exp {
    border-color: #8fe8e8;
    background: linear-gradient(#c8f6f0, #c8f6f0) center / 5px 1px no-repeat, linear-gradient(#c8f6f0, #c8f6f0) center / 1px 5px no-repeat, #00c8cb;
}

.current .ico {
    color: #c4c0f4;
}

/* status bar */
.status {
    display: grid;
    grid-template-columns: 895px 1fr auto;
    align-items: center;
    height: 24px;
    flex: none;
    padding: 0 72px 0 1px;
}

.status-sets, .status-filters {
    display: flex;
    align-items: center;
    gap: 8px;
}

.status-sets .combo {
    width: 204px;
    height: 18px;
    border: 0;
    border-radius: 0;
    background-color: #fcfcfc;
    color: #888;
}

.sico {
    width: 18px;
    height: 18px;
    fill: #999;
}

.status-sets .gap {
    margin-left: 12px;
}

.status-sets .count {
    margin-left: -6px;
}

.count.on {
    margin-left: -8px;
}

/* type properties window */
.dialog {
    position: absolute;
    left: 474px;
    top: 51px;
    width: 513px;
    background: #f0f0f0;
    border: 1px solid #68007f;
    border-radius: 8px;
    overflow: hidden;
    box-shadow: 0 10px 36px rgba(0, 0, 0, 0.5);
}

.dlg-head {
    display: flex;
    align-items: center;
    justify-content: space-between;
    height: 30px;
    padding: 0 9px;
    background: #68007f;
    color: #fff;
}

.dlg-head svg {
    width: 11px;
    height: 11px;
}

.dlg-body {
    padding: 12px 13px 12px 21px;
}

.dlg-form {
    display: grid;
    grid-template-columns: 56px 289px 106px;
    column-gap: 13px;
    row-gap: 9px;
    align-items: center;
    font-size: 11px;
}

.dlg-form label {
    margin-right: -13px;
}

.rename {
    grid-column: 3;
}

.params-title {
    margin-top: 6px;
    line-height: 20px;
    font-size: 11px;
}

.params {
    height: 518px;
    margin-top: 1px;
    border: 2px solid;
    border-color: #808080 #f8f8f8 #f8f8f8 #696969;
    background: #fff;
}

.param-table {
    width: 472px;
}

.c-eq {
    width: 12px;
}

.param-table thead th {
    height: 22px;
    line-height: 20px;
    border-right: 1px solid #000;
    border-bottom: 1px solid #000;
    background: #f0f0f0;
    text-align: center;
}

.param-table .group th {
    height: 22px;
    line-height: 19px;
    padding-left: 2px;
    border-top: 3px solid #fff;
    background: #99b4d1;
    font-weight: bold;
}

.param-table td {
    height: 18px;
    line-height: 17px;
    padding-left: 2px;
    border-bottom: 1px dotted #555;
    border-right: 1px dotted #555;
}

.cell-btn {
    display: block;
    width: 227px;
    height: 16px;
    line-height: 14px;
    margin-left: -1px;
    border: 1px solid #ccc;
    border-bottom: 2px solid #bbb;
    border-radius: 4px;
    background: #fdfdfd;
}

.picker {
    position: relative;
}

.picker-row {
    display: flex;
    justify-content: space-between;
}

.picker-row input {
    width: 15px;
    height: 15px;
    background: #0078d7;
    color: #fff;
}

.picker-row button {
    width: 15px;
    height: 16px;
    margin-right: 1px;
    border: 1px solid #aaa;
    border-right-color: #555;
    border-bottom-color: #555;
    background: #fff url("data:image/svg+xml,%3Csvg xmlns='http://www.w3.org/2000/svg' width='9' height='6'%3E%3Cpath d='M.5.5l4 4 4-4' fill='none' stroke='%23555'/%3E%3C/svg%3E") no-repeat center 7px;
}

.choices {
    position: absolute;
    z-index: 1;
    left: 0;
    right: 0;
    top: 17px;
    height: 67px;
    border: 1px solid #000;
    background: #fff;
}

.choices li {
    height: 15px;
    line-height: 16px;
    padding-left: 1px;
}

.choices .on {
    background: #0078d7;
    color: #fff;
    outline: 1px dotted #e08030;
    outline-offset: -1px;
}

.marker {
    position: absolute;
    z-index: 2;
    left: -16px;
    top: 48px;
    width: 94px;
    height: 40px;
    mix-blend-mode: multiply;
    opacity: 0.6;
}

.dlg-help {
    display: block;
    margin-top: 9px;
    line-height: 20px;
    font-size: 11px;
}

.dlg-actions {
    display: flex;
    gap: 8px;
    margin-top: 16px;
    font-size: 11px;
}

.dlg-actions .btn {
    width: 88px;
}

.dlg-actions .preview {
    margin-right: auto;
}
```
